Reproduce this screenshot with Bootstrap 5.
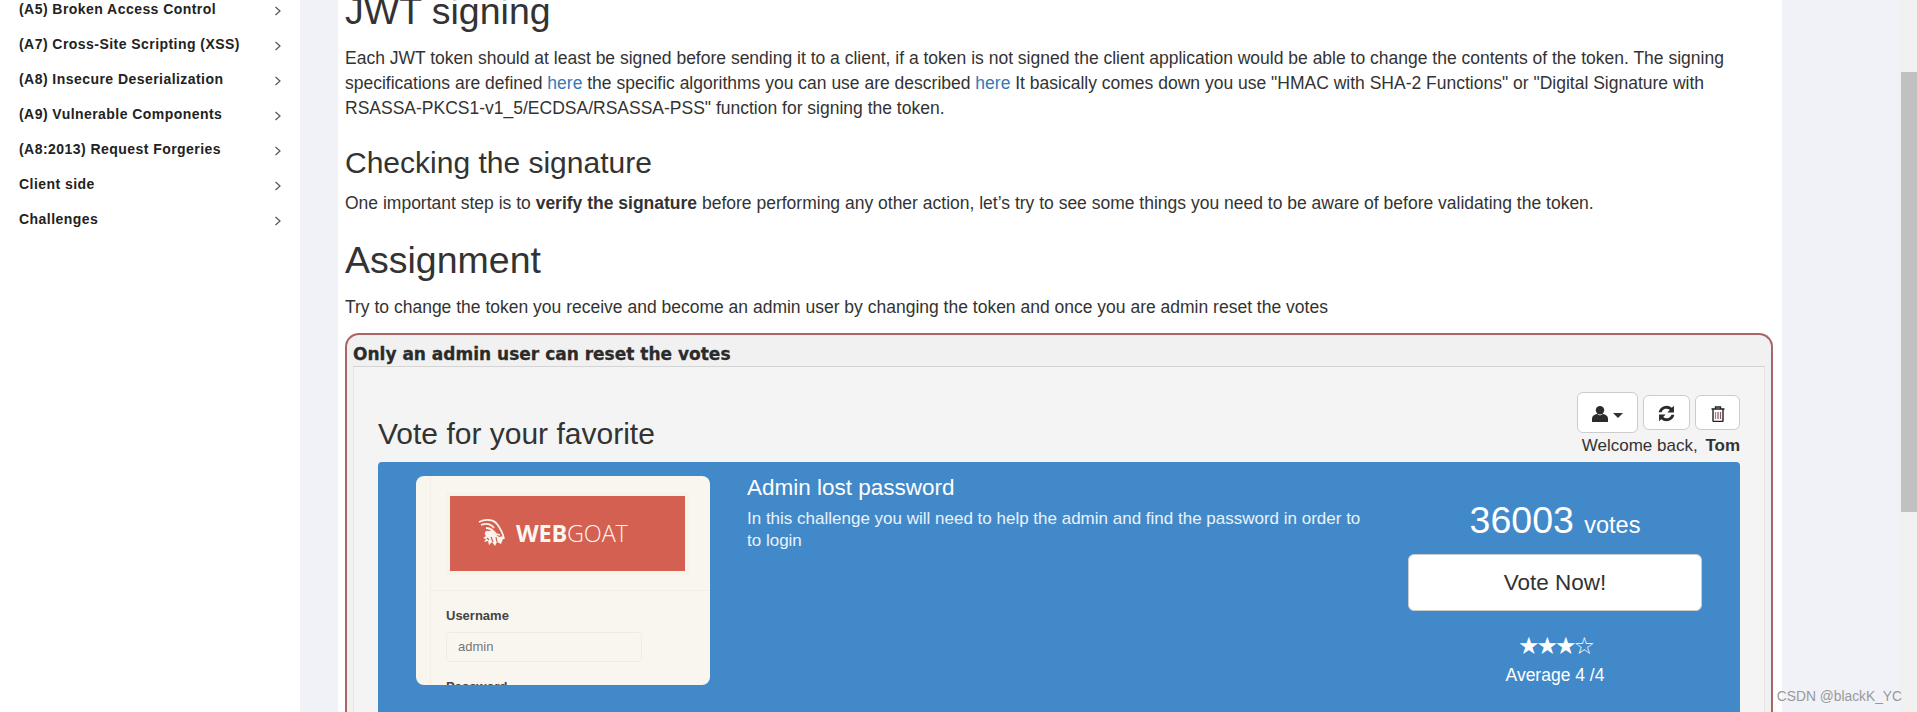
<!DOCTYPE html>
<html lang="en">
<head>
  <meta charset="UTF-8" />
  <title>WebGoat - JWT signing</title>
  <link href="https://cdn.jsdelivr.net/npm/bootstrap@5.3.0/dist/css/bootstrap.min.css" rel="stylesheet"/>
  <style>
    html, body { height: 712px; overflow: hidden; }
    body {
      margin: 0;
      background: #f0f2f7;
      font-family: "Liberation Sans", Arial, sans-serif;
      font-size: 17.5px;
      color: #333;
      position: relative;
    }
    .page-wrap { height: 712px; }

    /* Sidebar */
    .side-menu { width: 300px; background: #fff; flex: none; padding: 0 19px; margin-top: -8px; }
    .side-item {
      height: 35px;
      font-size: 14px;
      font-weight: 700;
      letter-spacing: .45px;
      color: #222;
    }
    .side-item svg { margin-top: 2px; margin-right: -1px; }

    /* Content */
    .main-col { width: 1444px; margin-left: 38px; background: #fff; padding: 0 9px 0 7px; flex: none; height: 712px; overflow: hidden; }
    .main-inner { margin-top: -9px; }
    .main-col h1 { font-size: 37.5px; font-weight: 400; line-height: 40px; margin: 0 0 15px; }
    .main-col h2 { font-size: 30px; font-weight: 400; line-height: 33px; margin: 0 0 12px; }
    .main-col p { line-height: 25px; margin: 0 0 25px; }
    .main-col p.check-note { margin-bottom: 24px; }
    .main-col p.assign-note { margin-bottom: 13px; }
    .main-col a { color: #337ab7; text-decoration: none; }

    /* Assignment frame */
    .assign-frame {
      border: 2px solid #a96565;
      border-bottom: 0;
      border-radius: 14px 14px 0 0;
      background: #f1f1f1;
      padding: 0 6px;
      height: 420px;
    }
    .assign-head {
      font-family: "DejaVu Sans", Verdana, sans-serif;
      font-size: 17px;
      font-weight: 700;
      line-height: 24px;
      padding-top: 7px;
      border-bottom: 1px solid #d4d4d4;
      color: #2b2b2b;
      -webkit-text-stroke: .3px #2b2b2b;
    }
    .vote-pane { background: #f4f4f4; border-left: 1px solid #e8e8e8; border-right: 1px solid #e4e4e4; padding: 25px 24px 0; height: 420px; }
    .vote-title { font-size: 30px; line-height: 34px; padding-top: 25px; color: #333; }
    .tool-row { gap: 5px; }
    .tool-btn {
      background: #fff;
      border: 1px solid #ccc;
      border-radius: 6px;
      height: 35px;
      width: 47px;
      padding: 0;
    }
    .tool-btn.user-btn { height: 41px; width: 61px; }
    .tool-btn.trash-btn { width: 45px; }
    .welcome { font-size: 17px; line-height: 22px; margin-top: 2px; padding-bottom: 5px; }
    .welcome b { margin-left: 3px; }

    /* Blue card */
    .vote-card { background: #4289c9; color: #fff; border-radius: 4px 4px 0 0; padding: 14px 38px 0; height: 300px; }
    .shot { width: 294px; height: 209px; background: #f9f6f0; border-radius: 8px; overflow: hidden; flex: none; color: #444; }
    .shot-head { height: 115px; margin-left: 14px; border-left: 1px solid #f3efe8; border-bottom: 1px solid #f3efe8; padding: 20px 20px 0 19px; }
    .shot-logo { height: 75px; width: 235px; background: #d46051; color: #fbf6f0; outline: 4px solid #f7f2ea; padding-left: 28px; font-family: "Open Sans", sans-serif; font-size: 23.500px; letter-spacing: -.2px; font-weight: 300; }
    .shot-logo svg { margin-right: 10px; }
    .shot-logo b { font-weight: 700; }
    .shot-body { margin-left: 14px; border-left: 1px solid #f3efe8; padding: 17px 0 0 15px; }
    .shot-label { font-size: 13px; font-weight: 700; line-height: 16px; }
    .shot-input { width: 196px; height: 30px; border: 1px solid #efebe3; border-radius: 4px; margin: 8px 0 17px; padding-left: 11px; font-size: 13px; line-height: 28px; color: #777; }
    .card-text-col { width: 625px; margin-left: 37px; flex: none; }
    .card-text-col h3 { font-size: 22.500px; font-weight: 400; line-height: 26px; margin: -1px 0 7px; }
    .card-text-col div { line-height: 22px; font-size: 17px; color: #e9f2fa; }
    .vote-col { width: 294px; margin-left: auto; text-align: center; padding-top: 23px; }
    .vote-count { font-size: 37.5px; line-height: 42px; }
    .vote-count small { font-size: 23.500px; }
    .vote-btn { display: block; width: 100%; height: 57px; background: #fff; border: 1px solid #ccc; border-radius: 6px; font-size: 22.500px; color: #333; margin-top: 8px; }
    .stars { font-family: "DejaVu Sans", sans-serif; font-size: 24px; line-height: 24px; margin-top: 23px; letter-spacing: -3px; }
    .average { font-size: 17.5px; line-height: 26px; margin-top: 4px; }

    /* Browser scrollbar + watermark */
    .scroll-gutter { width: 135px; flex: none; }
    .scroll-rail { width: 18px; margin-left: 117px; height: 712px; background: #f1f1f1; padding: 72px 0 0 2px; }
    .scroll-thumb { height: 440px; background: #c1c1c1; }
    .watermark { position: absolute; right: 15px; top: 687px; font-size: 13.800px; color: #999; }
  </style>
</head>
<body>

<div class="page-wrap d-flex">
  <!-- Sidebar -->
  <div class="side-menu">
    <div class="side-item d-flex justify-content-between align-items-center">(A5) Broken Access Control <svg width="8" height="10" viewBox="0 0 8 10"><path d="M1.5 1l4.5 4-4.5 4" fill="none" stroke="#555" stroke-width="1.2"/></svg></div>
    <div class="side-item d-flex justify-content-between align-items-center">(A7) Cross-Site Scripting (XSS) <svg width="8" height="10" viewBox="0 0 8 10"><path d="M1.5 1l4.5 4-4.5 4" fill="none" stroke="#555" stroke-width="1.2"/></svg></div>
    <div class="side-item d-flex justify-content-between align-items-center">(A8) Insecure Deserialization <svg width="8" height="10" viewBox="0 0 8 10"><path d="M1.5 1l4.5 4-4.5 4" fill="none" stroke="#555" stroke-width="1.2"/></svg></div>
    <div class="side-item d-flex justify-content-between align-items-center">(A9) Vulnerable Components <svg width="8" height="10" viewBox="0 0 8 10"><path d="M1.5 1l4.5 4-4.5 4" fill="none" stroke="#555" stroke-width="1.2"/></svg></div>
    <div class="side-item d-flex justify-content-between align-items-center">(A8:2013) Request Forgeries <svg width="8" height="10" viewBox="0 0 8 10"><path d="M1.5 1l4.5 4-4.5 4" fill="none" stroke="#555" stroke-width="1.2"/></svg></div>
    <div class="side-item d-flex justify-content-between align-items-center">Client side <svg width="8" height="10" viewBox="0 0 8 10"><path d="M1.5 1l4.5 4-4.5 4" fill="none" stroke="#555" stroke-width="1.2"/></svg></div>
    <div class="side-item d-flex justify-content-between align-items-center">Challenges <svg width="8" height="10" viewBox="0 0 8 10"><path d="M1.5 1l4.5 4-4.5 4" fill="none" stroke="#555" stroke-width="1.2"/></svg></div>
  </div>

  <!-- Main content -->
  <div class="main-col">
    <div class="main-inner">
      <h1>JWT signing</h1>
      <p>Each JWT token should at least be signed before sending it to a client, if a token is not signed the client application would be able to change the contents of the token. The signing specifications are defined <a href="#">here</a> the specific algorithms you can use are described <a href="#">here</a> It basically comes down you use "HMAC with SHA-2 Functions" or "Digital Signature with RSASSA-PKCS1-v1_5/ECDSA/RSASSA-PSS" function for signing the token.</p>
      <h2>Checking the signature</h2>
      <p class="check-note">One important step is to <b>verify the signature</b> before performing any other action, let’s try to see some things you need to be aware of before validating the token.</p>
      <h1>Assignment</h1>
      <p class="assign-note">Try to change the token you receive and become an admin user by changing the token and once you are admin reset the votes</p>

      <div class="assign-frame">
        <div class="assign-head">Only an admin user can reset the votes</div>
        <div class="vote-pane">
          <div class="d-flex justify-content-between align-items-start">
            <div class="vote-title">Vote for your favorite</div>
            <div class="text-end">
              <div class="d-flex tool-row justify-content-end align-items-center">
                <button class="tool-btn user-btn" type="button" aria-label="User">
                  <svg width="31" height="16" viewBox="0 0 31 16"><circle cx="8" cy="4.200" r="4.200" fill="#2b2b2b"/><path d="M0 16v-3.500C0 10 2.500 8.500 5 8l3 1.500L11 8c2.500.5 5 2 5 4.500V16z" fill="#2b2b2b"/><path d="M21 7h10l-5 5z" fill="#333"/></svg>
                </button>
                <button class="tool-btn" type="button" aria-label="Refresh">
                  <svg width="17" height="17" viewBox="0 0 16 16"><path d="M.6 6.800A7.500 7.500 0 0 1 13 2.700L15 .8v6.200H8.800l2.300-2.300A4.800 4.800 0 0 0 3.300 6.800zM15.400 9.200A7.500 7.500 0 0 1 3 13.300L1 15.200V9h6.200L4.900 11.300A4.800 4.800 0 0 0 12.700 9.200z" fill="#2b2b2b"/></svg>
                </button>
                <button class="tool-btn trash-btn" type="button" aria-label="Delete">
                  <svg width="14" height="16" viewBox="0 0 14 16"><path d="M.5 3h13M4.500 3V1h5V3M2 3v11.500a1 1 0 0 0 1 1h8a1 1 0 0 0 1-1V3" fill="none" stroke="#222" stroke-width="1.400"/><path d="M4.500 6v7" stroke="#c8743c" stroke-width="1.200"/><path d="M7 6v7" stroke="#5a5aa8" stroke-width="1.200"/><path d="M9.500 6v7" stroke="#a84c4c" stroke-width="1.200"/></svg>
                </button>
              </div>
              <div class="welcome">Welcome back, <b>Tom</b></div>
            </div>
          </div>

          <div class="vote-card d-flex align-items-start">
            <div class="shot">
              <div class="shot-head">
                <div class="shot-logo d-flex align-items-center">
                  <svg width="28" height="30" viewBox="0 0 28 30">
                    <path d="M1 3C7 0 15 0 19 5c3 4 6 9 7 15M3 6c5-2 10-1 13 3M8 9c3 0 5 1 7 3l3 3 4 1" fill="none" stroke="#fbf3ec" stroke-width="1.800"/>
                    <path d="M8 12c-2 2-1 4 0 5l-3 2 3 1-2 3 4-1 1 4 3-3 3 4 2-4 4 2 2-5 1-3-5 1-4-3-3-3z" fill="#fbf3ec"/>
                    <path d="M13 18l2 5M18 18l1 5M9 19l2 2" stroke="#d46051" stroke-width="1.200"/>
                  </svg>
                  <span><b>WEB</b>GOAT</span>
                </div>
              </div>
              <div class="shot-body">
                <div class="shot-label">Username</div>
                <div class="shot-input">admin</div>
                <div class="shot-label">Password</div>
              </div>
            </div>

            <div class="card-text-col">
              <h3>Admin lost password</h3>
              <div>In this challenge you will need to help the admin and find the password in order to to login</div>
            </div>

            <div class="vote-col">
              <div class="vote-count">36003 <small>votes</small></div>
              <button class="vote-btn" type="button">Vote Now!</button>
              <div class="stars">★★★☆</div>
              <div class="average">Average 4 /4</div>
            </div>
          </div>
        </div>
      </div>
    </div>
  </div>

  <!-- Browser scrollbar -->
  <div class="scroll-gutter">
    <div class="scroll-rail"><div class="scroll-thumb"></div></div>
  </div>
</div>

<div class="watermark">CSDN @blackK_YC</div>

<script src="https://cdn.jsdelivr.net/npm/bootstrap@5.3.0/dist/js/bootstrap.bundle.min.js"></script>
</body>
</html>
